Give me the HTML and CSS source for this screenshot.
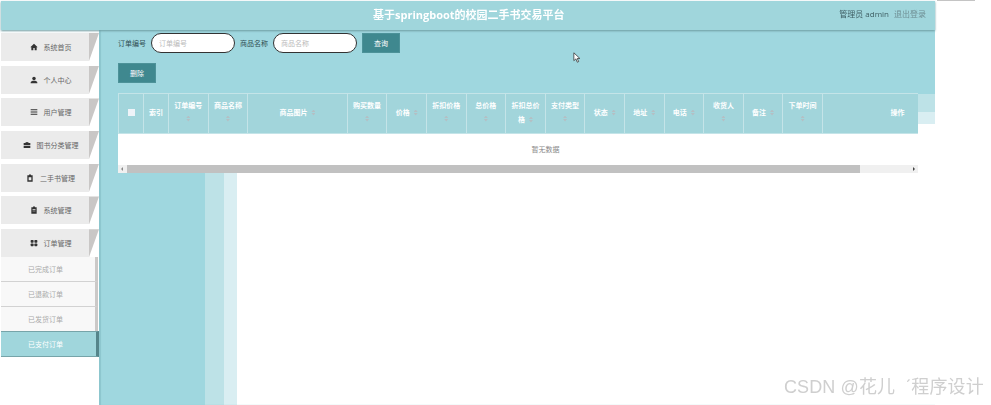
FILE: index.html
```html
<!DOCTYPE html>
<html lang="en">

<head>
    <meta charset="UTF-8">
    <meta name="viewport" content="width=device-width, initial-scale=1.0">
    <title>基于springboot的校园二手书交易平台</title>
    <link rel="stylesheet" href="styles.css">
</head>

<body>
    <div class="top-sliver"></div>
    <div class="app">
        <header class="top-bar">
            <h1 class="site-title">基于springboot的校园二手书交易平台</h1>
            <div class="user-info">
                <span>管理员 admin</span>
                <a class="logout">退出登录</a>
            </div>
        </header>

        <div class="content-row">
            <aside class="sidebar">
                <div class="menu-item">
                    <div class="menu-label">
                        <svg class="menu-icon" viewBox="0 0 12 12"><path d="M6 1 .5 6.2H2V11h3V7.6h2V11h3V6.2h1.5z"/></svg>
                        系统首页
                    </div>
                    <span class="menu-fold"></span>
                </div>
                <div class="menu-item">
                    <div class="menu-label">
                        <svg class="menu-icon" viewBox="0 0 12 12"><circle cx="6" cy="3.6" r="2.6"/><path d="M1 11V9.6C1 8 3.5 7.2 6 7.2s5 .8 5 2.4V11z"/></svg>
                        个人中心
                    </div>
                    <span class="menu-fold"></span>
                </div>
                <div class="menu-item">
                    <div class="menu-label">
                        <svg class="menu-icon" viewBox="0 0 12 12"><path d="M1 2h10v1.4H1zM1 5.3h10v1.4H1zM1 8.6h10V10H1z"/></svg>
                        用户管理
                    </div>
                    <span class="menu-fold"></span>
                </div>
                <div class="menu-item">
                    <div class="menu-label">
                        <svg class="menu-icon" viewBox="0 0 12 12"><path d="M4 1.5h4V3h3v3H1V3h3zM5 2.5V3h2v-.5zM1 7h10v3.5H1z"/></svg>
                        图书分类管理
                    </div>
                    <span class="menu-fold"></span>
                </div>
                <div class="menu-item">
                    <div class="menu-label">
                        <svg class="menu-icon" viewBox="0 0 12 12"><path d="M4.5.8h3V2H10v9.5H2V2h2.5zM4 5v4.5h4V5z"/></svg>
                        二手书管理
                    </div>
                    <span class="menu-fold"></span>
                </div>
                <div class="menu-item">
                    <div class="menu-label">
                        <svg class="menu-icon" viewBox="0 0 12 12"><path d="M4.5.8h3V2H10v9.5H2V2h2.5zM3.8 4.5v1h4.4v-1zM3.8 7v1h4.4V7z"/></svg>
                        系统管理
                    </div>
                    <span class="menu-fold"></span>
                </div>
                <div class="menu-item menu-item-open">
                    <div class="menu-label">
                        <svg class="menu-icon" viewBox="0 0 12 12"><rect x="1" y="1.5" width="4.4" height="4" rx="1"/><rect x="6.6" y="1.5" width="4.4" height="4" rx="1"/><rect x="1" y="6.8" width="4.4" height="4" rx="1"/><rect x="6.6" y="6.8" width="4.4" height="4" rx="1"/></svg>
                        订单管理
                    </div>
                    <span class="menu-fold"></span>
                </div>
                <ul class="sub-menu">
                    <li class="sub-item">已完成订单</li>
                    <li class="sub-item">已退款订单</li>
                    <li class="sub-item">已发货订单</li>
                    <li class="sub-item active">已支付订单</li>
                </ul>
            </aside>

            <main class="main-panel">
                <form class="search-row">
                    <label class="search-label">订单编号</label>
                    <input class="search-input" type="text" placeholder="订单编号">
                    <label class="search-label">商品名称</label>
                    <input class="search-input" type="text" placeholder="商品名称">
                    <button type="button" class="action-button">查询</button>
                </form>

                <div class="toolbar">
                    <button type="button" class="action-button">删除</button>
                </div>

                <div class="table-box">
                    <div class="table-scroll">
                        <table class="order-table">
                            <colgroup>
                                <col class="col-narrow"><col class="col-narrow"><col><col><col class="col-image">
                                <col><col><col><col><col><col><col><col><col><col><col><col>
                                <col class="col-actions">
                            </colgroup>
                            <thead>
                                <tr>
                                    <th><span class="check-box"></span></th>
                                    <th>索引</th>
                                    <th>订单编号<i class="sort sort-line"></i></th>
                                    <th>商品名称<i class="sort sort-line"></i></th>
                                    <th>商品图片<i class="sort"></i></th>
                                    <th>购买数量<i class="sort sort-line"></i></th>
                                    <th>价格<i class="sort"></i></th>
                                    <th>折扣价格<i class="sort sort-line"></i></th>
                                    <th>总价格<i class="sort sort-line"></i></th>
                                    <th>折扣总价<br>格<i class="sort"></i></th>
                                    <th>支付类型<i class="sort sort-line"></i></th>
                                    <th>状态<i class="sort"></i></th>
                                    <th>地址<i class="sort"></i></th>
                                    <th>电话<i class="sort"></i></th>
                                    <th>收货人<i class="sort sort-line"></i></th>
                                    <th>备注<i class="sort"></i></th>
                                    <th>下单时间<i class="sort sort-line"></i></th>
                                    <th>操作</th>
                                </tr>
                            </thead>
                            <tbody>
                                <tr>
                                    <td class="empty-cell" colspan="18">暂无数据</td>
                                </tr>
                            </tbody>
                        </table>
                    </div>
                    <div class="scroll-bar">
                        <span class="scroll-arrow scroll-left"></span>
                        <span class="scroll-thumb"></span>
                        <span class="scroll-arrow scroll-right"></span>
                    </div>
                </div>
            </main>
        </div>
    </div>

    <svg class="mouse-cursor" viewBox="0 0 10 14"><path d="M1 1v10l2.6-2.2L5.4 13l1.7-.8-1.8-4H8.6z"/></svg>
    <div class="watermark">CSDN @花儿&nbsp;&nbsp;ˊ程序设计</div>
</body>

</html>
```

FILE: styles.css
```css
* {
    box-sizing: border-box;
}

html,
body {
    height: 100%;
}

body {
    margin: 0;
    padding: 1px 0 0 1px;
    background-color: white;
    font-family: "Open Sans", "Noto Sans CJK SC", sans-serif;
    overflow: hidden;
    position: relative;
}

.app {
    width: 934px;
    height: 404px;
    display: flex;
    flex-direction: column;
    filter: blur(0.6px);
}

.top-sliver {
    position: absolute;
    left: 937px;
    top: 0;
    width: 38px;
    height: 1px;
    background-color: #c4c4c4;
}

.top-bar {
    height: 29px;
    flex: none;
    position: relative;
    z-index: 1;
    display: flex;
    align-items: center;
    justify-content: flex-end;
    padding: 0 9px 4px 0;
    background-color: #a0d6dc;
    box-shadow: 0 1px 2px #6d9ca2;
}

.site-title {
    position: absolute;
    left: 372px;
    top: 6px;
    margin: 0;
    font-size: 11px;
    line-height: 16px;
    font-weight: bold;
    color: white;
    white-space: nowrap;
}

.user-info {
    display: flex;
    gap: 5px;
    font-size: 8px;
    color: #3f5f64;
}

.logout {
    color: #6f8f94;
}

.content-row {
    flex: 1;
    display: flex;
    min-height: 0;
}

.sidebar {
    width: 98px;
    flex: none;
    padding-top: 3px;
    display: flex;
    flex-direction: column;
    gap: 4.7px;
    background-color: white;
}

.menu-item {
    height: 28px;
    flex: none;
    display: flex;
    background-color: white;
}

.menu-item-open {
    margin-bottom: -4.7px;
}

.menu-label {
    width: 88px;
    display: flex;
    align-items: center;
    justify-content: center;
    gap: 6px;
    padding-left: 11px;
    font-size: 7px;
    color: #666;
    background-color: #ebebeb;
}

.menu-icon {
    width: 8px;
    height: 8px;
    flex: none;
    fill: #333;
}

.menu-fold {
    width: 10px;
    background-color: #c9c7c6;
    clip-path: polygon(0 0, 100% 0, 0 100%);
}

.sub-menu {
    list-style: none;
    margin: 0;
    padding: 0;
}

.sub-item {
    height: 25px;
    width: 97px;
    display: flex;
    align-items: center;
    padding-left: 27px;
    font-size: 7px;
    color: #aaa;
    background-color: #f8f8f8;
    border-bottom: 1px solid #d2d2d2;
    border-right: 3px solid #cbc9c8;
}

.sub-item.active {
    height: 26px;
    width: 98px;
    margin-top: -1px;
    color: white;
    background-color: #a0d6dc;
    border: 1px solid #76a4a9;
    border-left: none;
    border-right: 3px solid #55858b;
}

.main-panel {
    flex: 1;
    min-width: 0;
    padding: 3px 17px 0 19px;
    background-color: white;
    background-image:
        linear-gradient(#9fd7df, #9fd7df),
        linear-gradient(#9fd7df, #9fd7df),
        linear-gradient(#bde2e7, #bde2e7),
        linear-gradient(#bde2e7, #bde2e7),
        linear-gradient(#d9eef2, #d9eef2),
        linear-gradient(#d9eef2, #d9eef2);
    background-repeat: no-repeat;
    background-size:
        100% 64px,
        106px 100%,
        100% 82px,
        125px 100%,
        100% 94px,
        138px 100%;
    box-shadow: inset 2px 0 1px #8cc6ce;
}

.search-row {
    height: 20px;
    display: flex;
    align-items: center;
}

.search-label {
    font-size: 7px;
    color: #2f4f53;
    width: 28px;
    white-space: nowrap;
}

.search-input {
    width: 84px;
    height: 20px;
    margin: 0 5px;
    padding: 0 7px;
    font-family: inherit;
    font-size: 7px;
    background-color: white;
    border: 1.5px solid #333;
    border-radius: 10px;
    outline: none;
}

.search-input::placeholder {
    color: #bbb;
}

.action-button {
    width: 38px;
    height: 20px;
    padding: 0;
    font-family: inherit;
    font-size: 7px;
    color: white;
    background-color: #3f888f;
    border: 1px solid #4d9299;
}

.toolbar {
    height: 20px;
    margin-top: 10px;
    display: flex;
}

.table-box {
    width: 800px;
    margin-top: 10px;
    background-color: white;
}

.table-scroll {
    overflow: hidden;
}

.order-table {
    width: 854px;
    table-layout: fixed;
    border-collapse: collapse;
    font-size: 7px;
}

.order-table col {
    width: 39.6px;
}

.order-table col.col-narrow {
    width: 25px;
}

.order-table col.col-image {
    width: 99.6px;
}

.order-table col.col-actions {
    width: 150px;
}

.order-table th {
    height: 40px;
    padding: 0 2px 2px;
    font-weight: bold;
    line-height: 14px;
    color: white;
    text-align: center;
    background-color: #a2d5db;
    border: 1px solid #c4e4e8;
}

.check-box {
    display: inline-block;
    width: 7px;
    height: 7px;
    vertical-align: middle;
    background-color: #eef3f8;
}

.sort {
    display: inline-block;
    width: 4px;
    height: 6px;
    margin-left: 4px;
    vertical-align: -1px;
    background-color: #b4bfc4;
    clip-path: polygon(50% 0, 100% 42%, 0 42%, 50% 0, 50% 100%, 0 58%, 100% 58%, 50% 100%);
}

.sort-line {
    display: block;
    margin: 3px auto 5px;
}

.empty-cell {
    height: 31px;
    font-size: 7px;
    color: #888;
    text-align: center;
    background-color: white;
}

.scroll-bar {
    height: 8px;
    display: flex;
    align-items: center;
    background-color: #f0f0f0;
}

.scroll-arrow {
    width: 9px;
    height: 8px;
    flex: none;
    position: relative;
}

.scroll-arrow::after {
    content: "";
    position: absolute;
    top: 2px;
    border-top: 2px solid transparent;
    border-bottom: 2px solid transparent;
}

.scroll-left::after {
    left: 3px;
    border-right: 2px solid #888;
}

.scroll-right {
    margin-left: auto;
}

.scroll-right::after {
    right: 3px;
    border-left: 2px solid #444;
}

.scroll-thumb {
    width: 733px;
    height: 8px;
    background-color: #c1c1c1;
}

.mouse-cursor {
    position: absolute;
    left: 573px;
    top: 52px;
    width: 8px;
    height: 11px;
    fill: white;
    stroke: #333;
    stroke-width: 1;
    filter: blur(0.3px);
}

.watermark {
    position: absolute;
    left: 784px;
    top: 376px;
    font-family: "Liberation Sans", "Noto Sans CJK SC", sans-serif;
    font-size: 18px;
    line-height: 22px;
    letter-spacing: 0.1px;
    color: #cfcfcf;
    white-space: nowrap;
}
```
